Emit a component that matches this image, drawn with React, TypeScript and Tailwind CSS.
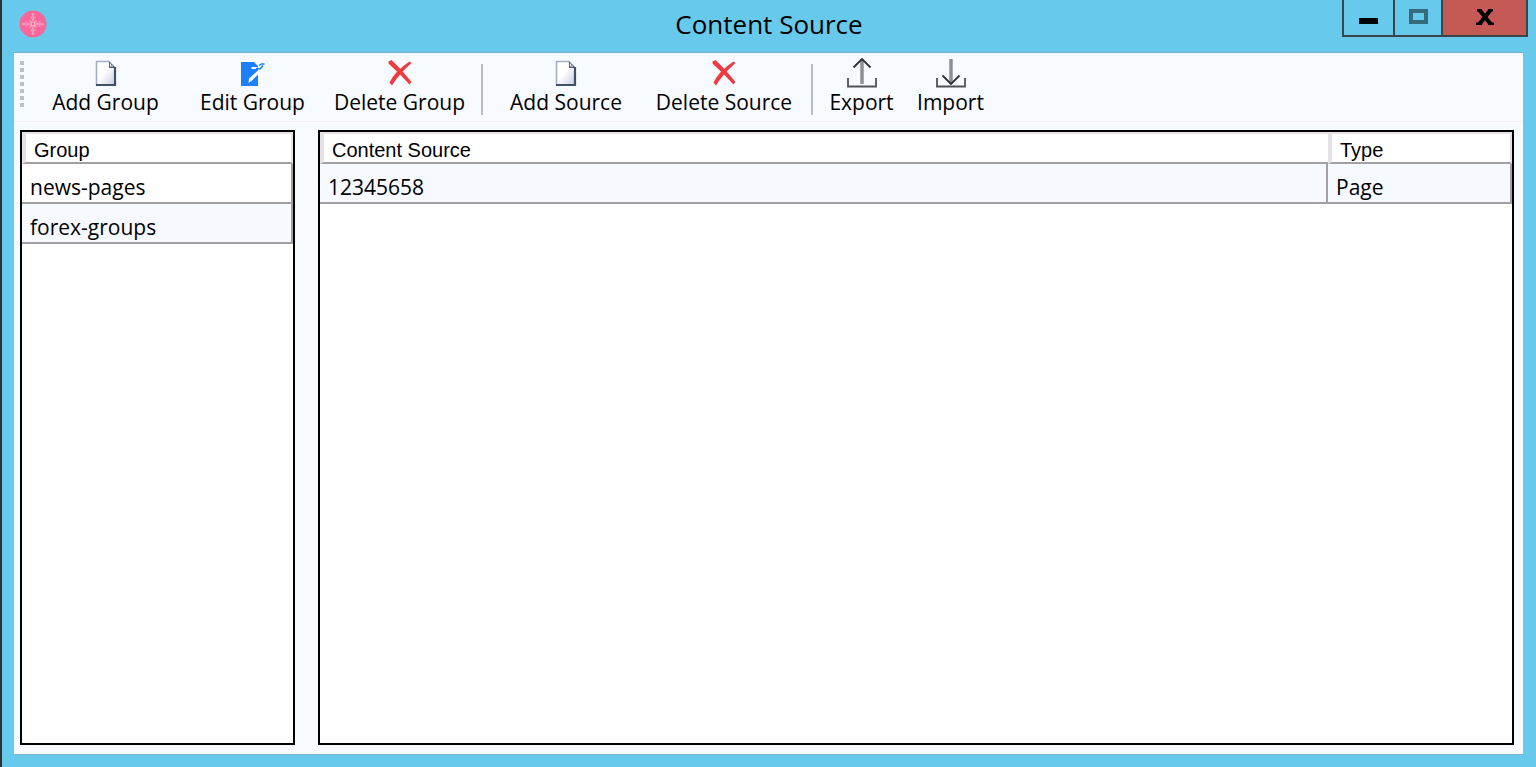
import type { ReactNode } from 'react'

import clsx from 'clsx'

/* ---------- Icons ---------- */

function AppLogo() {
  return (
    <svg viewBox="0 0 28 28" className="size-7" aria-hidden="true">
      <circle cx="14" cy="14" r="13.5" fill="#f9669a" />
      <g fill="none" stroke="#fb93b8">
        <path d="M14 3v8M14 17v8M3 14h8M17 14h8" strokeWidth="2.6" />
        <path d="M11 7.500h6M11 20.500h6M7.500 11v6M20.500 11v6" strokeWidth="1.600" opacity="0.6" />
        <path d="M10.500 10.500l7 7M17.500 10.500l-7 7" strokeWidth="1.600" />
      </g>
      <circle cx="14" cy="14" r="2" fill="#f9669a" stroke="#fdb7cf" strokeWidth="1.200" />
    </svg>
  )
}

function PageIcon() {
  return (
    <svg viewBox="0 0 22 28" className="h-7 w-[22px]" aria-hidden="true">
      <defs>
        <linearGradient id="page-fill" x1="0" y1="0" x2="1" y2="1">
          <stop offset="0.45" stopColor="#ffffff" />
          <stop offset="1" stopColor="#c5cbdf" />
        </linearGradient>
      </defs>
      <path d="M1 2h13.5l6 6v18H1z" fill="url(#page-fill)" />
      <path d="M1.500 26V2.500h13" fill="none" stroke="#a3aec4" strokeWidth="1.600" />
      <path d="M1 26h19V8" fill="none" stroke="#3f5068" strokeWidth="2.200" />
      <path d="M14 2l7 7h-7z" fill="#4d5e76" />
      <path d="M15.500 4.500v2.500h2.500" fill="none" stroke="#e8edf6" strokeWidth="1.200" />
    </svg>
  )
}

function EditIcon() {
  return (
    <svg viewBox="0 0 24 28" className="h-7 w-6" aria-hidden="true">
      <path d="M0 3h13l4 4v20H0z" fill="#1c80fb" />
      <path d="M7.500 24l.5-4.500L17.500 11l2 2L11 21.500z" fill="#f7faff" />
      <path d="M10.500 9h6" stroke="#f7faff" strokeWidth="2" />
      <path d="M15 9.500l4 .5 3-3.500" fill="none" stroke="#1c80fb" strokeWidth="1.600" />
      <path d="M18 6.500l2.500-1.500h3" fill="none" stroke="#1c80fb" strokeWidth="1.400" />
    </svg>
  )
}

function DeleteIcon() {
  return (
    <svg viewBox="0 0 26 28" className="h-7 w-[26px]" aria-hidden="true">
      <path d="M1.500 2.500L4.500 1Q14 10 24.500 23L22.500 25.500Q12 14 1.500 4.500z" fill="#ef3a3e" />
      <path d="M24.500 4L22.500 2.500Q8 12 2.500 23.500L5 26.500Q12 15 24.500 4z" fill="#ef3a3e" />
    </svg>
  )
}

function TrayIcon({ direction }: { direction: 'up' | 'down' }) {
  return (
    <svg viewBox="0 0 30 30" className="size-[30px]" fill="none" aria-hidden="true">
      <path d="M1 20v8.500h28V20" stroke="#505254" strokeWidth="1.800" />
      <path d="M15 1v25" stroke="#8d9092" strokeWidth="3.500" />
      <path
        d={direction === 'up' ? 'M6.500 9.500 15 1l8.500 8.500' : 'M6.500 17.500 15 26l8.500-8.500'}
        stroke="#303234"
        strokeWidth="1.800"
      />
    </svg>
  )
}

/* ---------- Toolbar ---------- */

function ToolButton({ icon, label, className }: { icon: ReactNode; label: string; className: string }) {
  return (
    <button type="button" className={clsx('flex shrink-0 flex-col items-center whitespace-nowrap', className)}>
      <span className="flex h-8 items-center">{icon}</span>
      <span className="text-[21px] leading-[26px]">{label}</span>
    </button>
  )
}

function Separator() {
  return <div className="mr-1 ml-2 h-[51px] w-[2px] shrink-0 self-center bg-[#bdbdbd]" />
}

function Toolbar() {
  return (
    <div role="toolbar" aria-label="Content source actions" className="flex h-[69px] border-b border-[#f4eff5] pt-1">
      <div className="mt-1 mr-2 ml-[6px] flex w-1 shrink-0 flex-col gap-[3px]">
        {[0, 1, 2, 3, 4, 5, 6].map((dot) => (
          <span key={dot} className="size-1 bg-[#c0c0c6]" />
        ))}
      </div>
      <ToolButton className="w-[147px]" icon={<PageIcon />} label="Add Group" />
      <ToolButton className="w-[147px]" icon={<EditIcon />} label="Edit Group" />
      <ToolButton className="w-[147px]" icon={<DeleteIcon />} label="Delete Group" />
      <Separator />
      <ToolButton className="w-[158px]" icon={<PageIcon />} label="Add Source" />
      <ToolButton className="w-[158px]" icon={<DeleteIcon />} label="Delete Source" />
      <Separator />
      <ToolButton className="w-[89px]" icon={<TrayIcon direction="up" />} label="Export" />
      <ToolButton className="w-[89px]" icon={<TrayIcon direction="down" />} label="Import" />
    </div>
  )
}

/* ---------- Tables ---------- */

const headCell =
  'h-8 border-t-2 border-b-2 border-l-4 border-[#e6e1e6] border-b-[#a3a0a5] bg-white px-2 pt-1 text-left font-["Liberation_Sans",sans-serif] text-xl leading-6 font-normal last:border-r-2'
const bodyCell = 'h-10 border-r-2 border-b-2 border-[#a3a0a5] px-2 pt-2 leading-7'

function GroupTable() {
  return (
    <table className="w-full table-fixed border-separate border-spacing-0 text-[21px]">
      <thead>
        <tr>
          <th scope="col" className={headCell}>Group</th>
        </tr>
      </thead>
      <tbody>
        <tr>
          <td className={bodyCell}>news-pages</td>
        </tr>
        <tr className="bg-[#f6f9ff]">
          <td className={bodyCell}>forex-groups</td>
        </tr>
      </tbody>
    </table>
  )
}

function SourceTable() {
  return (
    <table className="w-full table-fixed border-separate border-spacing-0 text-[21px]">
      <colgroup>
        <col />
        <col className="w-[184px]" />
      </colgroup>
      <thead>
        <tr>
          <th scope="col" className={headCell}>Content Source</th>
          <th scope="col" className={headCell}>Type</th>
        </tr>
      </thead>
      <tbody>
        <tr className="bg-[#f6f9ff]">
          <td className={bodyCell}>12345658</td>
          <td className={bodyCell}>Page</td>
        </tr>
      </tbody>
    </table>
  )
}

/* ---------- Window ---------- */

function TitleBar() {
  return (
    <header className="grid h-[52px] grid-cols-[1fr_auto_1fr] items-start">
      <div className="flex h-12 items-center pl-[17px]">
        <AppLogo />
      </div>
      <h1 className="text-[26px] leading-[48px]">Content Source</h1>
      <div className="mr-2 flex h-[37px] justify-self-end border-x-2 border-b-2 border-[#3b4449]">
        <button type="button" aria-label="Minimize" className="flex w-[51px] items-center justify-center border-r-2 border-[#3b4449]">
          <span className="mt-[7px] h-[6px] w-[19px] bg-black" />
        </button>
        <button type="button" aria-label="Maximize" className="flex w-[48px] items-center justify-center border-r-2 border-[#3b4449] pb-[2px]">
          <span className="h-[15px] w-[19px] border-4 border-[#366b7c]" />
        </button>
        <button type="button" aria-label="Close" className="flex w-[83px] items-center justify-center bg-[#c35a55] pb-[2px]">
          <svg viewBox="0 0 18 16" className="h-4 w-[18px]" aria-hidden="true">
            <path d="M3.500 1 14.500 15M14.500 1 3.500 15" stroke="#000" strokeWidth="4" />
            <path d="M1 1.200h5M12 1.200h5M0 14.800h6M12 14.800h6" stroke="#000" strokeWidth="2.400" />
          </svg>
        </button>
      </div>
    </header>
  )
}

export default function App() {
  return (
    <div className='flex min-h-screen flex-col border-l-2 border-[#2d3134] bg-[#67caec] font-["Open_Sans","Noto_Sans",sans-serif] text-black'>
      <TitleBar />
      <main className="mr-[13px] mb-3 ml-3 flex flex-1 flex-col border-y border-[#7fb0cd] bg-[#f7faff]">
        <Toolbar />
        <div className="flex flex-1 gap-[23px] pt-2 pr-[9px] pb-[9px] pl-[6px]">
          <section aria-label="Groups" className="w-[275px] shrink-0 border-2 border-black bg-white">
            <GroupTable />
          </section>
          <section aria-label="Sources" className="min-w-0 flex-1 border-2 border-black bg-white">
            <SourceTable />
          </section>
        </div>
      </main>
    </div>
  )
}
